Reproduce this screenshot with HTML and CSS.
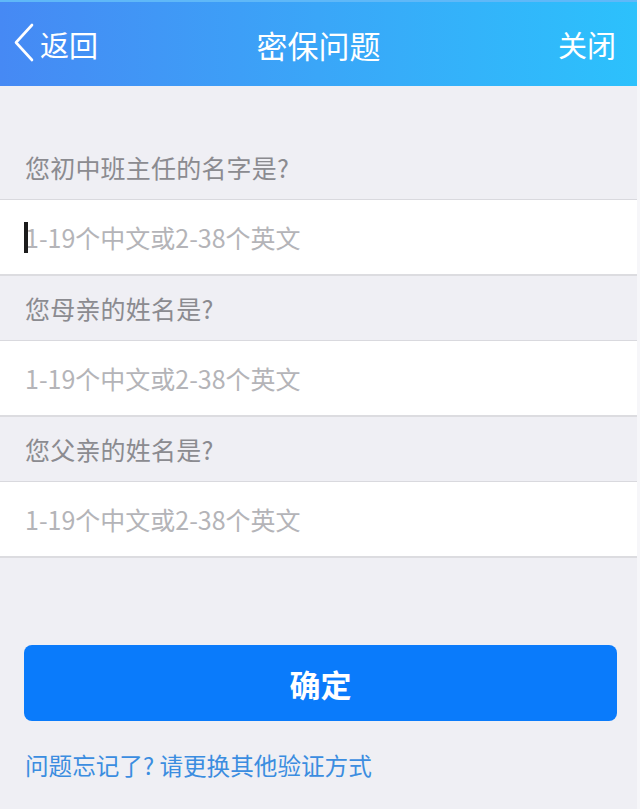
FILE: index.html
```
<!DOCTYPE html>
<html lang="zh-CN">
<head>
<meta charset="utf-8">
<title>密保问题</title>
<link rel="stylesheet" href="styles.css">
</head>
<body>
<div class="page">
  <header class="topbar">
    <div class="back">
      <svg class="chev" width="22" height="40" viewBox="0 0 22 40"><path d="M19 2 L3 19.5 L19 37" fill="none" stroke="#fff" stroke-width="2.6" stroke-linecap="round" stroke-linejoin="round"/></svg>
      <span>返回</span>
    </div>
    <div class="title">密保问题</div>
    <div class="close">关闭</div>
  </header>
  <main class="form">
    <div class="label first">您初中班主任的名字是?</div>
    <div class="field"><span class="caret"></span><span class="ph">1-19个中文或2-38个英文</span></div>
    <div class="label">您母亲的姓名是?</div>
    <div class="field"><span class="ph">1-19个中文或2-38个英文</span></div>
    <div class="label">您父亲的姓名是?</div>
    <div class="field"><span class="ph">1-19个中文或2-38个英文</span></div>
    <div class="actions">
      <button class="ok">确定</button>
      <a class="alt" href="#">问题忘记了? 请更换其他验证方式</a>
    </div>
  </main>
</div>
</body>
</html>
```
FILE: styles.css
```
* { box-sizing: border-box; }
html, body { margin: 0; padding: 0; }
body {
  background: #efeff4;
  font-family: "Noto Sans CJK SC", "Noto Sans", sans-serif;
  width: 640px;
  height: 809px;
  overflow: hidden;
}
.page {
  width: 640px;
  min-height: 809px;
  background: #efeff4;
  border-right: 3px solid #f6f6f9;
}
.topbar {
  height: 86px;
  background: linear-gradient(90deg, #4689f4 0%, #3aa6f8 50%, #2cc1fc 100%);
  border-top: 2px solid #5fb8f8;
  display: flex;
  align-items: center;
  justify-content: space-between;
  padding: 0 21px 0 13px;
  color: #fff;
  font-size: 29px;
}
.back {
  display: flex;
  align-items: center;
  gap: 5px;
  width: 150px;
}
.chev { display: block; margin-top: -2px; }
.title {
  font-size: 31px;
  margin-left: 8px;
}
.close {
  width: 150px;
  text-align: right;
}
.form {
  display: flex;
  flex-direction: column;
}
.label {
  height: 64px;
  display: flex;
  align-items: center;
  padding-left: 25px;
  font-size: 25px;
  letter-spacing: 0.2px;
  color: #8b8b90;
}
.label.first {
  height: 113px;
  padding-top: 49px;
}
.field {
  height: 77px;
  background: #fff;
  border-top: 1px solid #d9d9de;
  border-bottom: 2px solid #dcdce0;
  display: flex;
  align-items: center;
  padding-left: 24px;
  font-size: 25px;
  color: #b4b4b8;
}
.caret {
  display: inline-block;
  width: 4px;
  height: 31px;
  background: #1c1c1c;
  margin-right: -4px;
  position: relative;
  z-index: 1;
}
.ph { padding-left: 1px; }
.actions {
  padding: 87px 20px 0 24px;
  display: flex;
  flex-direction: column;
}
.ok {
  height: 76px;
  border: none;
  border-radius: 8px;
  background: #0a7bfb;
  color: #fff;
  font-family: inherit;
  font-size: 31px;
  font-weight: bold;
  padding: 0;
}
.alt {
  margin-top: 29px;
  padding-left: 1px;
  font-size: 23.6px;
  line-height: 30px;
  color: #3b8de0;
  text-decoration: none;
}
```
